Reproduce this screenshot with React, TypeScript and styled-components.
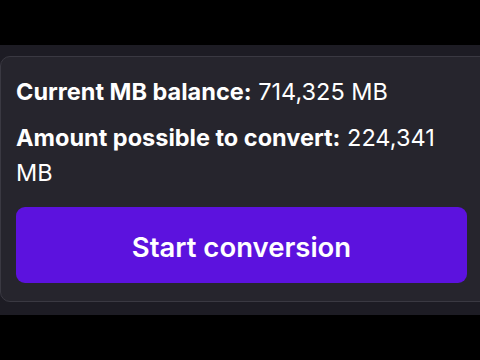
import styled, { createGlobalStyle } from "styled-components";

const GlobalStyle = createGlobalStyle`
  html, body {
    margin: 0;
    padding: 0;
    background: #000;
    width: 480px;
    height: 360px;
    overflow: hidden;
  }
  body {
    font-family: "Inter", "Noto Sans", sans-serif;
    color: #fff;
  }
`;

const Band = styled.div`
  margin-top: 45px;
  height: 270px;
  box-sizing: border-box;
  padding: 11px 0 13px 0;
  background: #1d1c24;
`;

const Card = styled.div`
  box-sizing: border-box;
  width: calc(100% + 14px);
  height: 246px;
  padding: 17px 26px 18px 15px;
  background: #26252d;
  border: 1px solid #3a3942;
  border-radius: 10px;
  display: flex;
  flex-direction: column;
`;

const Line = styled.p`
  margin: 0 0 11px 0;
  font-size: 23.5px;
  line-height: 35px;
  color: #fff;
`;

const Label = styled.strong`
  font-weight: 700;
`;

const ConvertButton = styled.button`
  margin-top: auto;
  height: 76px;
  width: 100%;
  padding: 3px 0 0 0;
  border: none;
  border-radius: 9px;
  background: #5c12de;
  color: #fff;
  font-family: "Inter", "Noto Sans", sans-serif;
  font-size: 27.5px;
  font-weight: 600;
  cursor: pointer;
`;

export default function App() {
  return (
    <>
      <GlobalStyle />
      <Band>
        <Card>
          <Line>
            <Label>Current MB balance:</Label> 714,325 MB
          </Line>
          <Line>
            <Label>Amount possible to convert:</Label> 224,341 MB
          </Line>
          <ConvertButton type="button">Start conversion</ConvertButton>
        </Card>
      </Band>
    </>
  );
}
